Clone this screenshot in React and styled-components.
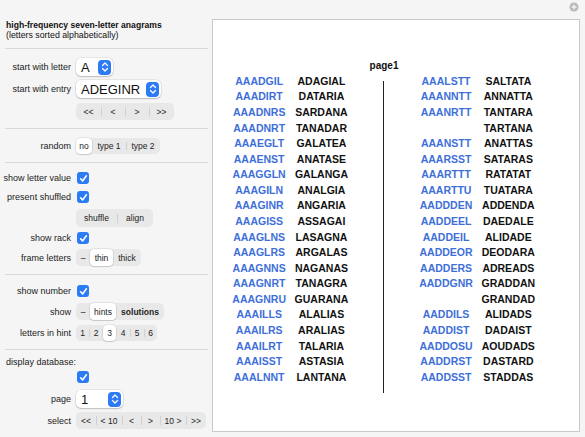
import React from "react";
import styled, { createGlobalStyle } from "styled-components";

//global reset
const GlobalStyle = createGlobalStyle`
  html, body {
    margin: 0;
    padding: 0;
    background: #f5f5f5;
  }
`;

// data for the grid
const leftRows = [
    ["AAADGIL", "ADAGIAL"],
    ["AAADIRT", "DATARIA"],
    ["AAADNRS", "SARDANA"],
    ["AAADNRT", "TANADAR"],
    ["AAAEGLT", "GALATEA"],
    ["AAAENST", "ANATASE"],
    ["AAAGGLN", "GALANGA"],
    ["AAAGILN", "ANALGIA"],
    ["AAAGINR", "ANGARIA"],
    ["AAAGISS", "ASSAGAI"],
    ["AAAGLNS", "LASAGNA"],
    ["AAAGLRS", "ARGALAS"],
    ["AAAGNNS", "NAGANAS"],
    ["AAAGNRT", "TANAGRA"],
    ["AAAGNRU", "GUARANA"],
    ["AAAILLS", "ALALIAS"],
    ["AAAILRS", "ARALIAS"],
    ["AAAILRT", "TALARIA"],
    ["AAAISST", "ASTASIA"],
    ["AAALNNT", "LANTANA"],
];

const rightRows = [
    ["AAALSTT", "SALTATA"],
    ["AAANNTT", "ANNATTA"],
    ["AAANRTT", "TANTARA"],
    ["", "TARTANA"],
    ["AAANSTT", "ANATTAS"],
    ["AAARSST", "SATARAS"],
    ["AAARTTT", "RATATAT"],
    ["AAARTTU", "TUATARA"],
    ["AADDDEN", "ADDENDA"],
    ["AADDEEL", "DAEDALE"],
    ["AADDEIL", "ALIDADE"],
    ["AADDEOR", "DEODARA"],
    ["AADDERS", "ADREADS"],
    ["AADDGNR", "GRADDAN"],
    ["", "GRANDAD"],
    ["AADDILS", "ALIDADS"],
    ["AADDIST", "DADAIST"],
    ["AADDOSU", "AOUDADS"],
    ["AADDRST", "DASTARD"],
    ["AADDSST", "STADDAS"],
];

// icons
const Stepper = () => (
    <StepBox>
        <svg width="8" height="12" viewBox="0 0 8 12">
            <path
                d="M1.5 4.5 L4 2 L6.5 4.5 M1.5 7.5 L4 10 L6.5 7.5"
                stroke="#fff"
                strokeWidth="1.3"
                fill="none"
                strokeLinecap="round"
                strokeLinejoin="round"
            />
        </svg>
    </StepBox>
);

const Check = () => (
    <CheckBox>
        <svg width="9" height="9" viewBox="0 0 9 9">
            <path
                d="M1.6 4.8 L3.6 6.9 L7.4 1.8"
                stroke="#fff"
                strokeWidth="1.6"
                fill="none"
                strokeLinecap="round"
                strokeLinejoin="round"
            />
        </svg>
    </CheckBox>
);

const Bar = ({ items, h = 17 }) => (
    <SegBar $h={h}>
        {items.map((it, i) => (
            <Seg
                key={i}
                $w={it.w}
                $active={it.active}
                $bold={it.bold}
                $sep={i > 0 && !it.active && !items[i - 1].active}
            >
                {it.t}
            </Seg>
        ))}
    </SegBar>
);

const App = () => {
    return (
        <>
            <GlobalStyle />
            <Page>
                <Left>
                    <Title>
                        <b>high-frequency seven-letter anagrams</b>
                        <span>(letters sorted alphabetically)</span>
                    </Title>

                    <Section $pt={9} $pb={8} $gap={4}>
                        <Row>
                            <Label>start with letter</Label>
                            <Popup $w={37}>
                                A
                                <Stepper />
                            </Popup>
                        </Row>
                        <Row>
                            <Label>start with entry</Label>
                            <Popup $w={85}>
                                ADEGINR
                                <Stepper />
                            </Popup>
                        </Row>
                        <Row $mt={1}>
                            <Label />
                            <Bar
                                items={[
                                    { t: "<<", w: 25 },
                                    { t: "<", w: 24 },
                                    { t: ">", w: 24 },
                                    { t: ">>", w: 25 },
                                ]}
                            />
                        </Row>
                    </Section>

                    <Section $pt={9} $pb={8}>
                        <Row>
                            <Label>random</Label>
                            <Bar
                                h={16}
                                items={[
                                    { t: "no", w: 16, active: true },
                                    { t: "type 1", w: 34 },
                                    { t: "type 2", w: 34 },
                                ]}
                            />
                        </Row>
                    </Section>

                    <Section $pt={9} $pb={8} $gap={6}>
                        <Row>
                            <Label>show letter value</Label>
                            <Check />
                        </Row>
                        <Row $mt={1}>
                            <Label>present shuffled</Label>
                            <Check />
                        </Row>
                        <Row>
                            <Label />
                            <Bar
                                h={18}
                                items={[
                                    { t: "shuffle", w: 41 },
                                    { t: "align", w: 36 },
                                ]}
                            />
                        </Row>
                        <Row $mt={-1}>
                            <Label>show rack</Label>
                            <Check />
                        </Row>
                        <Row $mt={-1}>
                            <Label>frame letters</Label>
                            <Bar
                                items={[
                                    { t: "–", w: 14 },
                                    { t: "thin", w: 23, active: true },
                                    { t: "thick", w: 28 },
                                ]}
                            />
                        </Row>
                    </Section>

                    <Section $pt={10} $pb={8} $gap={5}>
                        <Row>
                            <Label>show number</Label>
                            <Check />
                        </Row>
                        <Row $mt={1}>
                            <Label>show</Label>
                            <Bar
                                items={[
                                    { t: "–", w: 14 },
                                    { t: "hints", w: 26, active: true },
                                    { t: "solutions", w: 48, bold: true },
                                ]}
                            />
                        </Row>
                        <Row>
                            <Label>letters in hint</Label>
                            <Bar
                                h={16}
                                items={[
                                    { t: "1", w: 13 },
                                    { t: "2", w: 14 },
                                    { t: "3", w: 13, active: true },
                                    { t: "4", w: 14 },
                                    { t: "5", w: 14 },
                                    { t: "6", w: 13 },
                                ]}
                            />
                        </Row>
                    </Section>

                    <Section $pt={7} $pb={6} $gap={4} $last>
                        <Caption>display database:</Caption>
                        <Row $mt={0}>
                            <Label />
                            <Check />
                        </Row>
                        <Row $mt={3}>
                            <Label>page</Label>
                            <Popup $w={47}>
                                1
                                <Stepper />
                            </Popup>
                        </Row>
                        <Row>
                            <Label>select</Label>
                            <Bar
                                items={[
                                    { t: "<<", w: 20 },
                                    { t: "< 10", w: 26 },
                                    { t: "<", w: 19 },
                                    { t: ">", w: 19 },
                                    { t: "10 >", w: 26 },
                                    { t: ">>", w: 20 },
                                ]}
                            />
                        </Row>
                    </Section>
                </Left>

                <RightCol>
                    <TopBar>
                        <svg width="10" height="10" viewBox="0 0 10 10">
                            <circle cx="5" cy="5" r="4.5" fill="#b9b9b9" />
                            <path
                                d="M5 2.6 V7.4 M2.6 5 H7.4"
                                stroke="#f5f5f5"
                                strokeWidth="1.3"
                            />
                        </svg>
                    </TopBar>
                    <Panel>
                        <GridWrap>
                            <PageTitle>page1</PageTitle>
                            <WordGrid>
                                {leftRows.map((row, i) => (
                                    <React.Fragment key={i}>
                                        <Code>{row[0]}</Code>
                                        <Word>{row[1]}</Word>
                                        {i === 0 && (
                                            <DividerCell>
                                                <Divider />
                                            </DividerCell>
                                        )}
                                        <Code>{rightRows[i][0]}</Code>
                                        <Word>{rightRows[i][1]}</Word>
                                    </React.Fragment>
                                ))}
                            </WordGrid>
                        </GridWrap>
                    </Panel>
                </RightCol>
            </Page>
        </>
    );
};

const Page = styled.div`
    display: flex;
    height: 437px;
    overflow: hidden;
    background: #f5f5f5;
    font-family: "Liberation Sans", Arial, Helvetica, sans-serif;
    color: #222;
`;

const Left = styled.div`
    width: 212px;
    box-sizing: border-box;
    padding: 0 4px 0 5px;
    display: flex;
    flex-direction: column;
`;

const Title = styled.div`
    display: flex;
    flex-direction: column;
    padding: 20px 0 8px 1px;
    font-size: 8.8px;
    line-height: 10px;
    color: #111;
    b {
        font-weight: bold;
        font-size: 8.6px;
    }
`;

const Section = styled.div`
    display: flex;
    flex-direction: column;
    gap: ${(p) => p.$gap || 0}px;
    padding-top: ${(p) => p.$pt}px;
    padding-bottom: ${(p) => p.$pb}px;
    border-top: 1px solid #d9d9d9;
`;

const Row = styled.div`
    display: grid;
    grid-template-columns: 66px auto;
    column-gap: 5px;
    align-items: center;
    justify-items: start;
    margin-top: ${(p) => p.$mt || 0}px;
`;

const Label = styled.div`
    justify-self: end;
    font-size: 9px;
    color: #222;
    white-space: nowrap;
`;

const Caption = styled.div`
    font-size: 9px;
    line-height: 10px;
    padding-left: 1px;
    color: #222;
`;

const Popup = styled.div`
    width: ${(p) => p.$w}px;
    height: 18px;
    box-sizing: border-box;
    display: flex;
    align-items: center;
    justify-content: space-between;
    padding: 0 2px 0 5px;
    background: #fff;
    border-radius: 5px;
    box-shadow: 0 0 0 0.5px rgba(0, 0, 0, 0.12), 0 1px 1.5px rgba(0, 0, 0, 0.18);
    font-size: 13px;
    color: #111;
`;

const StepBox = styled.div`
    width: 13px;
    height: 15px;
    border-radius: 4px;
    background: #2d7bf4;
    display: flex;
    align-items: center;
    justify-content: center;
`;

const CheckBox = styled.div`
    width: 12px;
    height: 12px;
    margin-left: 1px;
    border-radius: 3px;
    background: #2b7bf5;
    display: flex;
    align-items: center;
    justify-content: center;
`;

const SegBar = styled.div`
    display: flex;
    height: ${(p) => p.$h}px;
    background: #e8e8e8;
    border-radius: 5px;
`;

const Seg = styled.div`
    position: relative;
    width: ${(p) => p.$w}px;
    display: flex;
    align-items: center;
    justify-content: center;
    font-size: 8.5px;
    font-weight: ${(p) => (p.$bold ? "bold" : "normal")};
    color: #222;
    white-space: nowrap;
    background: ${(p) => (p.$active ? "#fff" : "transparent")};
    border-radius: ${(p) => (p.$active ? "4px" : "0")};
    box-shadow: ${(p) =>
        p.$active ? "0 0 0 0.5px rgba(0,0,0,0.15), 0 1px 1px rgba(0,0,0,0.12)" : "none"};
    &::before {
        content: "";
        display: ${(p) => (p.$sep ? "block" : "none")};
        position: absolute;
        left: 0;
        top: 25%;
        height: 50%;
        width: 1px;
        background: #d0d0d0;
    }
`;

const RightCol = styled.div`
    flex: 1;
    display: flex;
    flex-direction: column;
    padding: 0 5px 5px 0;
`;

const TopBar = styled.div`
    height: 19px;
    display: flex;
    align-items: center;
    justify-content: flex-end;
    padding-right: 1px;
    padding-bottom: 5px;
    box-sizing: border-box;
`;

const Panel = styled.div`
    flex: 1;
    background: #fff;
    border: 1px solid #c9c9c9;
    padding: 40px 0 0 15px;
`;

const GridWrap = styled.div`
    width: 312px;
    display: flex;
    flex-direction: column;
`;

const PageTitle = styled.div`
    text-align: center;
    font-size: 10px;
    line-height: 12px;
    font-weight: bold;
    color: #111;
    margin-bottom: 1px;
`;

const WordGrid = styled.div`
    display: grid;
    grid-template-columns: repeat(5, 62.3px);
    grid-auto-rows: 15.58px;
    align-items: center;
    justify-items: center;
    font-size: 10.5px;
    font-weight: bold;
`;

const Code = styled.div`
    color: #3e6fd9;
    white-space: nowrap;
`;

const Word = styled.div`
    color: #111;
    white-space: nowrap;
`;

const DividerCell = styled.div`
    grid-column: 3;
    grid-row: 1 / span 20;
    align-self: stretch;
    display: flex;
    justify-content: center;
`;

const Divider = styled.div`
    width: 1px;
    height: 100%;
    margin-top: 8px;
    background: #222;
`;

export default App;
